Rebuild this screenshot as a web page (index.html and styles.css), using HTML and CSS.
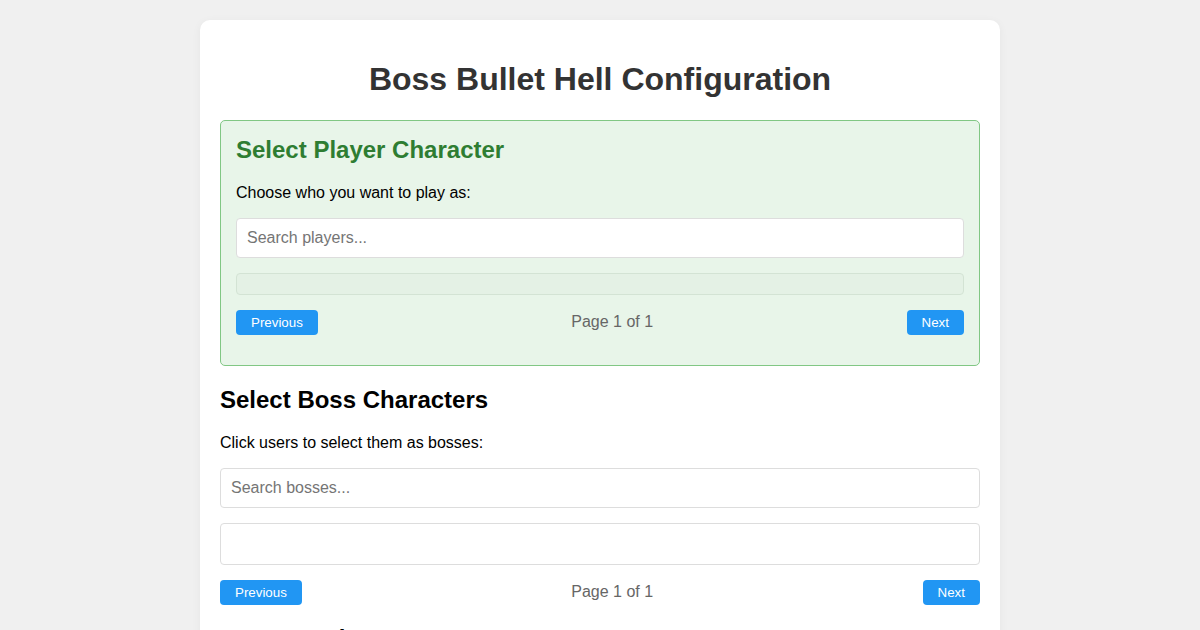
FILE: index.html
```html
<!DOCTYPE html>
<html>
<head>
    <title>Boss Bullet Hell Configuration</title>
    <link rel="stylesheet" href="styles.css">
</head>
<body>
    <div class="container">
        <h1>Boss Bullet Hell Configuration</h1>

        <div class="player-section">
            <h2>Select Player Character</h2>
            <p>Choose who you want to play as:</p>
            <input type="text" class="search-box" placeholder="Search players...">
            <div class="user-list player-list"></div>
            <div class="pagination">
                <button class="btn">Previous</button>
                <span class="page-info">Page 1 of 1</span>
                <button class="btn">Next</button>
            </div>
        </div>

        <h2>Select Boss Characters</h2>
        <p>Click users to select them as bosses:</p>
        <input type="text" class="search-box" placeholder="Search bosses...">
        <div class="user-list"></div>
        <div class="pagination">
            <button class="btn">Previous</button>
            <span class="page-info">Page 1 of 1</span>
            <button class="btn">Next</button>
        </div>

        <h2>Game Settings</h2>
        <p>Adjust difficulty and start the fight.</p>
    </div>
</body>
</html>
```

FILE: styles.css
```css
body {
    font-family: "Liberation Sans", Arial, sans-serif;
    background: #f0f0f0;
    margin: 0;
    padding: 20px 0;
}
.container {
    max-width: 760px;
    margin: 0 auto;
    background: white;
    padding: 20px;
    border-radius: 10px;
    box-shadow: 0 2px 10px rgba(0,0,0,0.05);
}
h1 {
    text-align: center;
    color: #333;
    font-size: 32px;
}
h2 {
    font-size: 24px;
}
.player-section {
    background: #e8f5e9;
    border: 1px solid #81c784;
    border-radius: 5px;
    padding: 15px;
    margin-bottom: 20px;
}
.player-section h2 {
    color: #2e7d32;
    margin-top: 0;
}
.search-box {
    display: block;
    width: 100%;
    box-sizing: border-box;
    padding: 10px;
    font-family: inherit;
    font-size: 16px;
    border: 1px solid #ddd;
    border-radius: 4px;
    margin-bottom: 15px;
}
.search-box::placeholder { color: #757575; }
.user-list {
    border: 1px solid #ddd;
    border-radius: 4px;
    padding: 10px;
    min-height: 20px;
}
.player-list {
    min-height: 0;
    background: rgba(0,0,0,0.015);
    border-color: #d3e3d4;
}
.pagination {
    display: flex;
    justify-content: space-between;
    align-items: center;
    margin: 15px 0;
}
.page-info {
    color: #666;
    font-size: 16px;
}
.btn {
    background: #2196f3;
    color: white;
    border: none;
    border-radius: 4px;
    padding: 5px 15px;
    font-family: inherit;
    font-size: 13.33px;
    cursor: pointer;
}
```
